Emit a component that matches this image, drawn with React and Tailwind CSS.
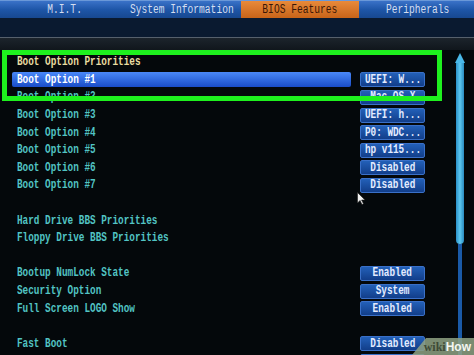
import React from "react";

const tabs = ["M.I.T.", "System Information", "BIOS Features", "Peripherals"];

// null = empty spacer row
const rows = [
  { label: "Boot Option Priorities", title: true },
  { label: "Boot Option #1", value: "UEFI: W...", active: true },
  { label: "Boot Option #2", value: "Mac OS X" },
  { label: "Boot Option #3", value: "UEFI: h..." },
  { label: "Boot Option #4", value: "P0: WDC..." },
  { label: "Boot Option #5", value: "hp v115..." },
  { label: "Boot Option #6", value: "Disabled" },
  { label: "Boot Option #7", value: "Disabled" },
  null,
  { label: "Hard Drive BBS Priorities" },
  { label: "Floppy Drive BBS Priorities" },
  null,
  { label: "Bootup NumLock State", value: "Enabled" },
  { label: "Security Option", value: "System" },
  { label: "Full Screen LOGO Show", value: "Enabled" },
  null,
  { label: "Fast Boot", value: "Disabled" },
  { label: "", value: " " },
];

// tall, narrow BIOS-ish glyphs: 12px mono squeezed horizontally
const mono =
  "inline-block font-['Liberation_Mono',monospace] font-bold text-[12px] leading-[12px] whitespace-nowrap scale-x-[0.78]";

const Row = ({ row }) => {
  if (!row) return <div className="h-[17.6px]" />;
  return (
    <div className="h-[17.6px] flex items-center pl-[12px]">
      <div
        className={
          "w-[339px] h-[15px] flex items-center px-[5px] rounded-[2px] " +
          (row.active
            ? "bg-gradient-to-b from-[#4a88f8] to-[#1a4cc8] text-white"
            : row.title
            ? "text-[#e8dca0]"
            : "text-[#52c4c4]")
        }
      >
        <span className={mono + " origin-left"}>{row.label}</span>
      </div>
      {row.value && (
        <div className="ml-[9px] w-[65px] h-[15px] flex items-center justify-center rounded-[2px] border border-[#3a70c8] bg-gradient-to-b from-[#2360b8] to-[#123e8a] text-[#e4ecff]">
          <span className={mono + " origin-center"}>{row.value.trim()}</span>
        </div>
      )}
    </div>
  );
};

export default function App() {
  return (
    <div className="relative w-[474px] h-[355px] overflow-hidden bg-[#04080b]">
      {/* tab bar */}
      <div className="h-[18px] grid grid-cols-[117.5px_117.5px_117.5px_117.5px] pl-[6px] bg-gradient-to-b from-[#3a72c8] via-[#1e56a8] to-[#174890] border-t border-[#6a98d8]">
        {tabs.map((t) => (
          <div
            key={t}
            className={
              "flex items-center justify-center " +
              (t === "BIOS Features"
                ? "bg-gradient-to-b from-[#e88a3a] to-[#c86418] text-[#3a1606]"
                : "text-[#d4def0]")
            }
          >
            <span className="inline-block font-['Liberation_Mono',monospace] text-[12px] leading-[12px] whitespace-nowrap scale-x-[0.8]">
              {t}
            </span>
          </div>
        ))}
      </div>
      <div className="h-[19px] bg-[#0a1a30]" />
      <div className="h-[1px] bg-[#56606c]" />
      <div className="h-[12px] bg-gradient-to-b from-[#1c242c] to-[#10161c]" />

      {/* content */}
      <div className="flex">
        <div className="flex-1 pt-[3.5px]">
          {rows.map((r, i) => (
            <Row key={i} row={r} />
          ))}
        </div>
        <div className="w-[16px] mr-[6px] flex flex-col items-center pt-[3px]">
          <svg width="10" height="10" viewBox="0 0 10 10">
            <polygon points="5,0 10,10 0,10" fill="#4ab8e8" />
          </svg>
          <div className="w-[8px] h-[181px] rounded-b-[4px] bg-gradient-to-r from-[#2a90c8] via-[#5cc8f0] to-[#2a8cc0]" />
          <div className="w-[4px] h-[120px] bg-[#1a5aa8]" />
        </div>
      </div>

      {/* green annotation box */}
      <div className="absolute left-[2px] top-[50px] w-[440px] h-[51px] border-[5px] border-[#1ef01e]" />

      {/* mouse cursor */}
      <svg className="absolute left-[357px] top-[192px]" width="9" height="13" viewBox="0 0 9 13">
        <polygon points="0.5,0.5 0.5,11 3,8.5 5,12.5 6.5,11.8 4.6,8 8,8" fill="#f0f0f0" stroke="#202020" strokeWidth="0.6" />
      </svg>

      {/* watermark */}
      <div className="absolute right-0 bottom-0 w-[62px] h-[17px] bg-[#8fa284]/85 [clip-path:polygon(14px_0,100%_0,100%_100%,0_100%)] flex items-center justify-end pr-[3px] font-['Liberation_Serif',serif] font-bold text-[12px]">
        <span className="text-[#3e4a36]">wiki</span>
        <span className="text-[#f4f6f0] font-['Liberation_Sans',sans-serif]">How</span>
      </div>
    </div>
  );
}
